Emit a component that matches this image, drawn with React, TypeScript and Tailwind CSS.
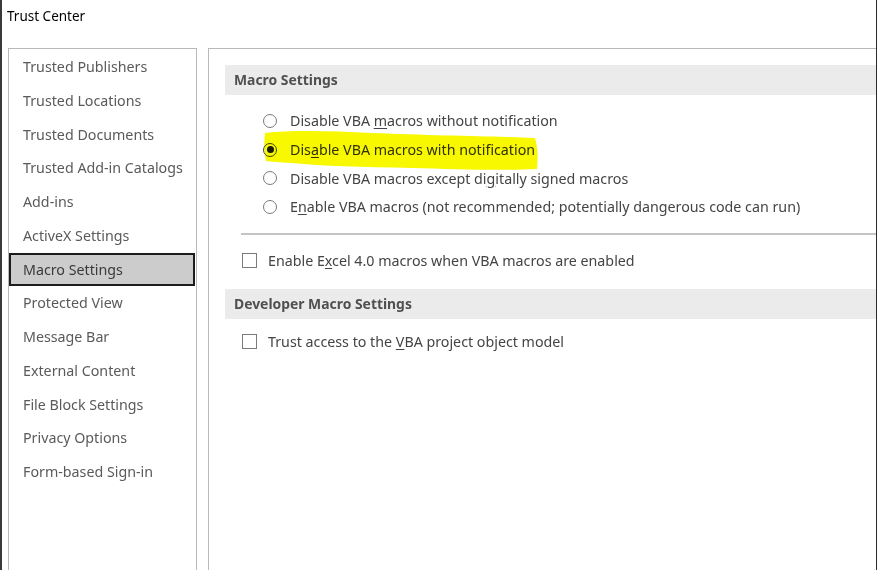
import React from "react";

const leftItems = [
  "Trusted Publishers",
  "Trusted Locations",
  "Trusted Documents",
  "Trusted Add-in Catalogs",
  "Add-ins",
  "ActiveX Settings",
  "Macro Settings",
  "Protected View",
  "Message Bar",
  "External Content",
  "File Block Settings",
  "Privacy Options",
  "Form-based Sign-in",
];

function U({ children }: { children: React.ReactNode }) {
  return <span className="underline underline-offset-2 decoration-1">{children}</span>;
}

function Radio({ checked }: { checked?: boolean }) {
  return (
    <span
      className={`flex h-[14px] w-[14px] shrink-0 items-center justify-center rounded-full border bg-white ${
        checked ? "border-[#444444]" : "border-[#7a7a7a]"
      }`}
    >
      {checked && <span className="h-[7px] w-[7px] rounded-full bg-[#1a1a1a]" />}
    </span>
  );
}

function Check() {
  return <span className="h-[15px] w-[15px] shrink-0 border border-[#7a7a7a] bg-white" />;
}

export default function App() {
  const font = { fontFamily: '"Noto Sans", "Open Sans", sans-serif' };
  return (
    <div
      className="relative h-[570px] w-[877px] overflow-hidden border-l-2 border-r border-l-[#3a3a3a] border-r-[#2a2a2a] bg-white"
      style={font}
    >
      <div className="flex h-[48px] items-start pl-[5px] pt-[6px] text-[13.5px] text-black">Trust Center</div>
      <div className="flex gap-[11px] pl-[6px]">
        {/* left nav */}
        <div className="h-[560px] w-[189px] shrink-0 border border-[#b9b9b9] pt-[1px]">
          {leftItems.map((t) => {
            const sel = t === "Macro Settings";
            return (
              <div
                key={t}
                className={`flex h-[33.75px] items-center text-[14.25px] ${
                  sel
                    ? "mr-[1px] border-2 border-[#1c1c1c] bg-[#cccccc] pl-[12px] text-[#3a3a3a]"
                    : "pl-[14px] text-[#5a5a5a]"
                }`}
              >
                {t}
              </div>
            );
          })}
        </div>
        {/* right pane */}
        <div className="h-[560px] flex-1 border-l border-t border-[#b9b9b9] pl-[16px] pt-[16px]">
          <div className="flex h-[30px] items-center bg-[#ebebeb] pl-[9px] text-[13.9px] font-bold text-[#505050]">
            Macro Settings
          </div>
          <div className="mt-[11.5px] pl-[38px] text-[14.25px] text-[#444444]">
            <div className="flex h-[28.7px] items-center gap-[13px]">
              <Radio />
              <span>
                Disable VBA <U>m</U>acros without notification
              </span>
            </div>
            <div className="flex h-[28.7px] items-center gap-[13px]">
              <Radio checked />
              <span className="text-[#333333]">
                Dis<U>a</U>ble VBA macros with notification
              </span>
            </div>
            <div className="flex h-[28.7px] items-center gap-[13px]">
              <Radio />
              <span>
                Disable VBA macros except di<U>g</U>itally signed macros
              </span>
            </div>
            <div className="flex h-[28.7px] items-center gap-[13px]">
              <Radio />
              <span>
                E<U>n</U>able VBA macros (not recommended; potentially dangerous code can run)
              </span>
            </div>
          </div>
          <div className="ml-[16px] mt-[12px] h-[2px] bg-[#c4c4c4]" />
          <div className="ml-[17px] mt-[16px] flex h-[18px] items-center gap-[11px] text-[14.25px] text-[#444444]">
            <Check />
            <span>
              Enable E<U>x</U>cel 4.0 macros when VBA macros are enabled
            </span>
          </div>
          <div className="mt-[20px] flex h-[30px] items-center bg-[#ebebeb] pl-[9px] text-[13.9px] font-bold text-[#505050]">
            Developer Macro Settings
          </div>
          <div className="ml-[17px] mt-[13px] flex h-[18px] items-center gap-[11px] text-[14.25px] text-[#444444]">
            <Check />
            <span>
              Trust access to the <U>V</U>BA project object model
            </span>
          </div>
        </div>
      </div>
      {/* highlighter stroke */}
      <svg
        className="pointer-events-none absolute left-0 top-0 mix-blend-multiply"
        width="877"
        height="570"
        viewBox="0 0 877 570"
      >
        <path
          d="M263,133 C290,130 330,131 370,133 C420,135 470,136 505,137 L533,138 C536,148 536,158 535,169 C500,171 450,169 410,168 C360,167 320,166 290,163 C278,162 270,162 264,161 C262,152 262,142 263,133 Z"
          fill="#f8f800"
        />
      </svg>
    </div>
  );
}
